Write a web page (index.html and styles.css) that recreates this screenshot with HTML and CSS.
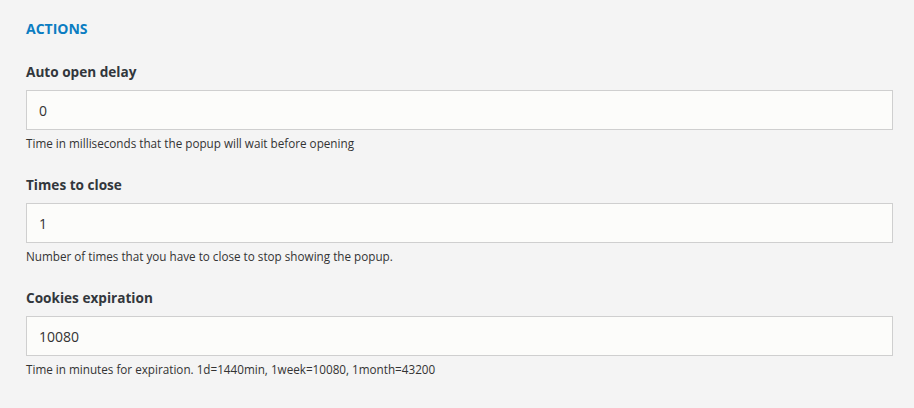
FILE: index.html
```html
<!DOCTYPE html>
<html lang="en">
<head>
  <meta charset="UTF-8" />
  <meta name="viewport" content="width=device-width, initial-scale=1.0" />
  <title>Popup actions</title>
  <link rel="stylesheet" href="styles.css">
</head>
<body>
  <!-- Actions settings panel -->
  <div class="panel">
    <h2 class="section-title">ACTIONS</h2>

    <div class="field">
      <label class="field-label" for="delay">Auto open delay</label>
      <input class="field-input" id="delay" type="text" value="0" />
      <p class="field-help">Time in milliseconds that the popup will wait before opening</p>
    </div>

    <div class="field">
      <label class="field-label" for="times">Times to close</label>
      <input class="field-input" id="times" type="text" value="1" />
      <p class="field-help">Number of times that you have to close to stop showing the popup.</p>
    </div>

    <div class="field">
      <label class="field-label" for="cookies">Cookies expiration</label>
      <input class="field-input" id="cookies" type="text" value="10080" />
      <p class="field-help">Time in minutes for expiration. 1d=1440min, 1week=10080, 1month=43200</p>
    </div>
  </div>
</body>
</html>
```

FILE: styles.css
```css
/* Page background */
body {
  margin: 0;
  background-color: #f4f4f4;
  font-family: "Open Sans", "DejaVu Sans", sans-serif;
  color: #333;
}
/* Panel holding all fields */
.panel {
  padding: 19px 21px 0 26px;
}
/* Blue section heading */
.section-title {
  margin: 0;
  font-size: 14px;
  line-height: 20px;
  font-weight: 700;
  color: #0b7dc2;
}
/* Each field group */
.field {
  margin-top: 23px;
}
.field + .field {
  margin-top: 24px;
}
.field-label {
  display: block;
  font-size: 13.6px;
  line-height: 20px;
  font-weight: 700;
  color: #32373c;
  margin-bottom: 8px;
}
.field-input {
  display: block;
  box-sizing: border-box;
  width: 100%;
  height: 40px;
  margin: 0;
  padding: 0 12px;
  border: 1px solid #cfcfcf;
  border-radius: 0;
  background-color: #fcfcfa;
  font-family: inherit;
  font-size: 14px;
  color: #333;
  outline: none;
}
.field-help {
  margin: 5px 0 0;
  font-size: 11.7px;
  line-height: 16px;
  color: #333;
}
```
